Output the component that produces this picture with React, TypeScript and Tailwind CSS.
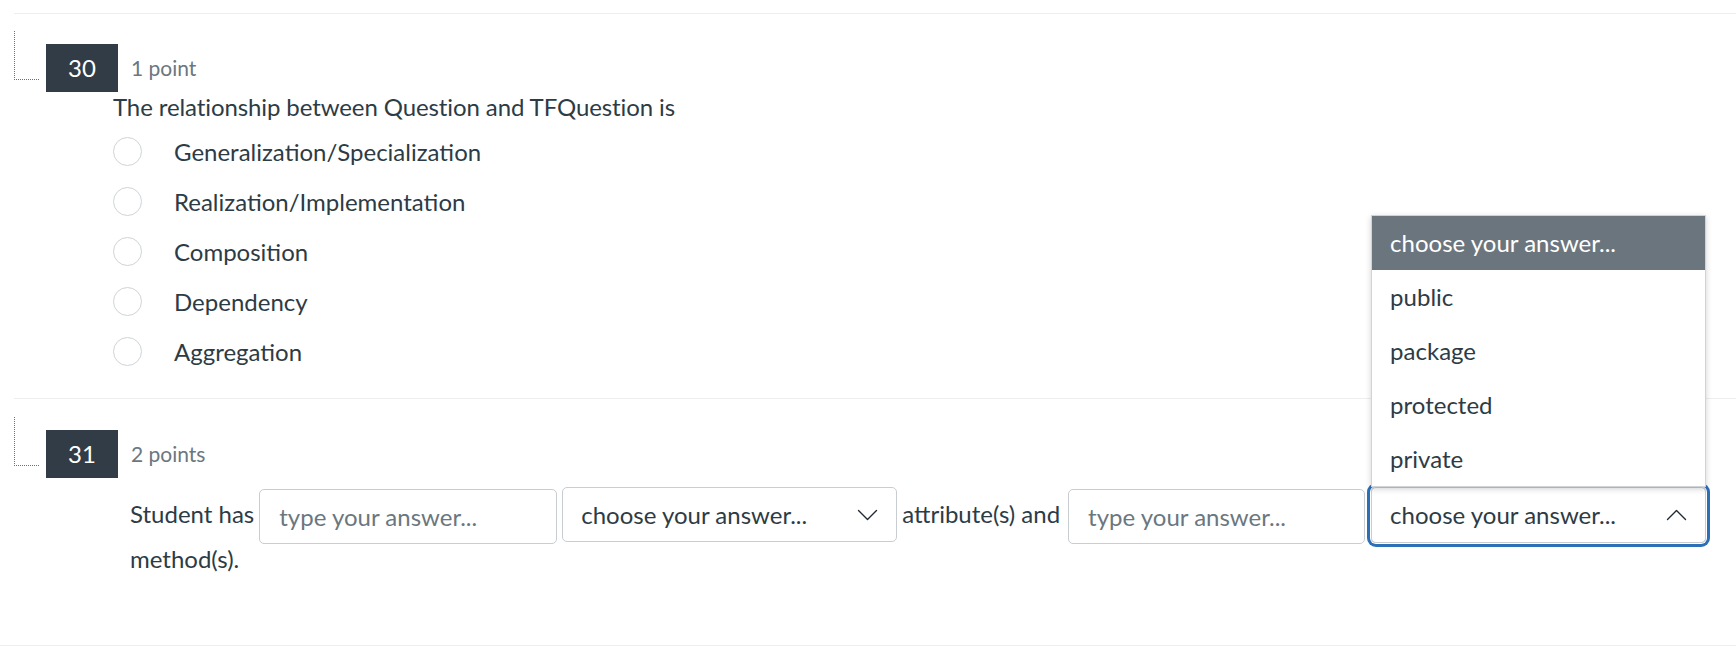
import React from "react";

function Chevron({ up }: { up?: boolean }) {
  return (
    <svg width="21" height="12" viewBox="0 0 21 12" fill="none" stroke="#1f2933" strokeWidth="1.4" strokeLinecap="round" strokeLinejoin="round">
      {up ? <path d="M1.5 10.5 L10.5 1.5 L19.5 10.5" /> : <path d="M1.5 1.5 L10.5 10.5 L19.5 1.5" />}
    </svg>
  );
}

function Header({ n, pts }: { n: string; pts: string }) {
  return (
    <div className="flex items-start">
      <div className="w-[25px] h-[49px] border-l border-b border-dotted border-[#6f6f6f]" />
      <div className="ml-[7px] mt-[13px] w-[72px] h-[48px] bg-[#313c46] text-white text-[24px] flex items-center justify-center">
        {n}
      </div>
      <div className="ml-[13px] mt-[13px] h-[48px] flex items-center text-[21px] text-[#6b7780]">{pts}</div>
    </div>
  );
}

const options = [
  "Generalization/Specialization",
  "Realization/Implementation",
  "Composition",
  "Dependency",
  "Aggregation",
];

export default function App() {
  return (
    <div className="w-[1736px] h-[670px] bg-white text-[#2d3b45] font-[Lato,sans-serif] overflow-hidden">
      <div className="h-[13px]" />
      <section className="ml-[14px] border-t border-[#eeeeee] pt-[17px] pb-[22px]">
        <Header n="30" pts="1 point" />
        <div className="pl-[99px] text-[24px] leading-[30px] tracking-[-0.1px]">
          The relationship between Question and TFQuestion is
        </div>
        <div className="pl-[99px] mt-[4px]">
          {options.map((o) => (
            <div key={o} className="h-[50px] flex items-center">
              <div className="w-[29px] h-[29px] rounded-full border border-[#cfd4d8] bg-white" />
              <span className="ml-[32px] text-[24px] leading-[30px] mt-[2px]">{o}</span>
            </div>
          ))}
        </div>
      </section>
      <section className="ml-[14px] border-t border-[#eeeeee] pt-[18px] pb-[71px]">
        <Header n="31" pts="2 points" />
        <div className="mt-[9px] pl-[116px] flex flex-wrap items-center gap-x-[5px] text-[24px] leading-[30px]">
          <span className="-mt-[3px]">Student has</span>
          <div className="self-start mt-[2px] w-[298px] h-[55px] rounded-[5px] border border-[#c7cdd1] flex items-center pl-[19px] text-[#6b7780]">
            type your answer...
          </div>
          <div className="self-start w-[335px] h-[55px] rounded-[5px] border border-[#c7cdd1] flex items-center justify-between pl-[18px] pr-[18px]">
            <span>choose your answer...</span>
            <Chevron />
          </div>
          <span className="-mt-[3px]">attribute(s) and</span>
          <div className="self-start mt-[2px] ml-[3px] w-[297px] h-[55px] rounded-[5px] border border-[#c7cdd1] flex items-center pl-[19px] text-[#6b7780]">
            type your answer...
          </div>
          <div className="self-start relative ml-[1px] w-[335px] h-[56px]">
            <div className="w-full h-full rounded-[5px] border border-[#c7cdd1] ring-[3px] ring-[#2b6fb6] ring-offset-[1px] flex items-center justify-between pl-[18px] pr-[18px]">
              <span>choose your answer...</span>
              <Chevron up />
            </div>
            <div className="absolute left-0 bottom-full w-full z-10 bg-white border border-[#d0d4d8] shadow-[0_2px_6px_rgba(0,0,0,0.18)]">
              <div className="h-[54px] bg-[#6b757e] text-white flex items-center pl-[18px]">choose your answer...</div>
              {["public", "package", "protected", "private"].map((t) => (
                <div key={t} className="h-[54px] flex items-center pl-[18px]">
                  {t}
                </div>
              ))}
            </div>
          </div>
          <span className="basis-full">method(s).</span>
        </div>
      </section>
      <div className="border-t border-[#eeeeee]" />
    </div>
  );
}
